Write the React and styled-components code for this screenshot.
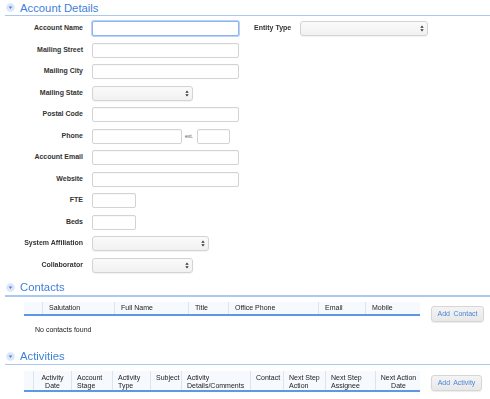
import React from "react";
import styled, { createGlobalStyle } from "styled-components";

const GlobalStyle = createGlobalStyle`
  html, body {
    margin: 0;
    padding: 0;
    background: #ffffff;
  }
  body {
    font-family: "Liberation Sans", Arial, sans-serif;
    color: #222;
  }
`;

const Page = styled.div`
  width: 490px;
  height: 399px;
  padding-left: 5px;
  box-sizing: border-box;
  overflow: hidden;
`;

const SectionHeader = styled.div`
  display: flex;
  align-items: center;
  gap: 5px;
  height: ${(p) => p.h || 15}px;
  margin-top: ${(p) => p.top || 0}px;
  padding-left: 1px;
  border-bottom: ${(p) => p.line || 1}px solid #abc8ef;
  box-sizing: content-box;
`;

const HeaderTitle = styled.span`
  font-size: 11.3px;
  color: #3f80dc;
  line-height: 15px;
  padding-top: 1px;
`;

const Toggle = () => (
  <svg width="9" height="9" viewBox="0 0 9 9">
    <circle cx="4.5" cy="4.5" r="4.3" fill="#dbe7f8" />
    <path d="M2.6 3.6 L6.4 3.6 L4.5 5.9 Z" fill="#4a86d8" />
  </svg>
);

const FormArea = styled.div`
  display: grid;
  grid-template-columns: 249px auto;
  margin-top: 5px;
`;

const Column = styled.div`
  display: flex;
  flex-direction: column;
  gap: 6.5px;
`;

const Row = styled.div`
  display: flex;
  align-items: center;
  gap: 9px;
  height: 15px;
`;

const Label = styled.label`
  width: ${(p) => (p.auto ? "auto" : "78px")};
  text-align: ${(p) => (p.auto ? "left" : "right")};
  font-size: 7px;
  font-weight: bold;
  color: #333;
  white-space: nowrap;
  margin-top: -2px;
`;

const TextInput = styled.input`
  display: block;
  margin: 0;
  width: ${(p) => p.w}px;
  height: 15px;
  box-sizing: border-box;
  border: 1px solid ${(p) => (p.focused ? "#8db4ee" : "#d3d3d3")};
  box-shadow: ${(p) => (p.focused ? "0 0 0 1px #b9d2f5" : "inset 0 1px 1px rgba(0,0,0,0.03)")};
  border-radius: 2px;
  padding: 0 3px;
  font-size: 7px;
  font-family: inherit;
  outline: none;
  background: #fff;
`;

const ExtText = styled.span`
  font-size: 5px;
  color: #555;
  margin: 0 -5px 0 -6px;
`;

const SelectWrap = styled.div`
  position: relative;
  width: ${(p) => p.w}px;
  height: 15px;
  flex-shrink: 0;
`;

const Select = styled.select`
  display: block;
  appearance: none;
  margin: 0;
  padding: 0 3px;
  box-sizing: border-box;
  width: 100%;
  height: 15px;
  border: 1px solid #d3d3d3;
  border-radius: 3px;
  background: linear-gradient(#fafafa, #f1f1f1);
  box-shadow: 0 1px 1px rgba(0, 0, 0, 0.05);
  font-size: 7px;
  line-height: 13px;
  font-family: inherit;
  outline: none;
`;

const Arrows = styled.svg`
  position: absolute;
  right: 4px;
  top: 4px;
  pointer-events: none;
`;

const SelectBox = ({ w }) => (
  <SelectWrap w={w}>
    <Select>
      <option></option>
    </Select>
    <Arrows width="4" height="7" viewBox="0 0 4 7">
      <path d="M0.3 2.8 L2 0.6 L3.7 2.8 Z M0.3 4.2 L2 6.4 L3.7 4.2 Z" fill="#333" />
    </Arrows>
  </SelectWrap>
);

const TableRow = styled.div`
  display: flex;
  align-items: flex-start;
  gap: 11px;
  margin-top: ${(p) => p.top || 0}px;
  padding-left: 19px;
`;

const Table = styled.div`
  display: flex;
  width: 396px;
  background: #f6f9fe;
  border-bottom: 2px solid #5d98e2;
`;

const HeadCell = styled.div`
  width: ${(p) => p.w}px;
  flex-shrink: 0;
  box-sizing: border-box;
  padding: ${(p) => (p.tall ? (p.center ? "3px 1px 1px 1px" : "3px 3px 1px 5px") : "0 4px 0 6px")};
  height: ${(p) => (p.tall ? 19 : 12)}px;
  display: flex;
  align-items: ${(p) => (p.tall ? "flex-start" : "center")};
  justify-content: ${(p) => (p.center ? "center" : "flex-start")};
  text-align: ${(p) => (p.center ? "center" : "left")};
  font-size: 7px;
  line-height: 8px;
  color: #222;
  border-left: ${(p) => (p.first ? "none" : "1px solid #dbe4ef")};
`;

const AddButton = styled.button`
  margin-top: 4px;
  width: ${(p) => p.w}px;
  height: 16px;
  border: 1px solid #d6d6d6;
  border-radius: 3px;
  background: linear-gradient(#f4f4f4, #e8e8e8);
  box-shadow: 0 1px 1px rgba(0, 0, 0, 0.08);
  color: #4a86d8;
  font-family: inherit;
  font-size: 7px;
  word-spacing: 1.5px;
  padding: 0;
`;

const EmptyNote = styled.div`
  font-size: 7px;
  color: #222;
  padding-left: 30px;
  margin-top: 4px;
`;

const contactCols = [
  { w: 18, t: "" },
  { w: 72, t: "Salutation" },
  { w: 74, t: "Full Name" },
  { w: 40, t: "Title" },
  { w: 90, t: "Office Phone" },
  { w: 47, t: "Email" },
  { w: 55, t: "Mobile" },
];

const activityCols = [
  { w: 9, t: "" },
  { w: 38, t: "Activity Date", center: true },
  { w: 41, t: "Account Stage" },
  { w: 38, t: "Activity Type" },
  { w: 31, t: "Subject" },
  { w: 69, t: "Activity Details/Comments" },
  { w: 33, t: "Contact" },
  { w: 42, t: "Next Step Action" },
  { w: 50, t: "Next Step Assignee" },
  { w: 46, t: "Next Action Date", center: true },
];

const leftFields = [
  { label: "Account Name", w: 147, focused: true },
  { label: "Mailing Street", w: 147 },
  { label: "Mailing City", w: 147 },
  { label: "Mailing State", select: 101 },
  { label: "Postal Code", w: 147 },
  { label: "Phone", w: 90, ext: true },
  { label: "Account Email", w: 147 },
  { label: "Website", w: 147 },
  { label: "FTE", w: 44 },
  { label: "Beds", w: 44 },
  { label: "System Affiliation", select: 117 },
  { label: "Collaborator", select: 101 },
];

const App = () => {
  return (
    <Page>
      <GlobalStyle />
      <SectionHeader>
        <Toggle />
        <HeaderTitle>Account Details</HeaderTitle>
      </SectionHeader>

      <FormArea>
        <Column>
          {leftFields.map((f) => (
            <Row key={f.label}>
              <Label>{f.label}</Label>
              {f.select ? (
                <SelectBox w={f.select} />
              ) : (
                <TextInput w={f.w} focused={f.focused} autoFocus={f.focused} />
              )}
              {f.ext && (
                <>
                  <ExtText>ext.</ExtText>
                  <TextInput w={33} />
                </>
              )}
            </Row>
          ))}
        </Column>
        <Column>
          <Row>
            <Label auto>Entity Type</Label>
            <SelectBox w={128} />
          </Row>
        </Column>
      </FormArea>

      <SectionHeader top={7} line={2}>
        <Toggle />
        <HeaderTitle>Contacts</HeaderTitle>
      </SectionHeader>
      <TableRow top={5}>
        <Table>
          {contactCols.map((c, i) => (
            <HeadCell key={i} w={c.w} first={i === 0}>
              {c.t}
            </HeadCell>
          ))}
        </Table>
        <AddButton w={53}>Add Contact</AddButton>
      </TableRow>
      <EmptyNote>No contacts found</EmptyNote>

      <SectionHeader top={16}>
        <Toggle />
        <HeaderTitle>Activities</HeaderTitle>
      </SectionHeader>
      <TableRow top={6}>
        <Table>
          {activityCols.map((c, i) => (
            <HeadCell key={i} w={c.w} tall first={i === 0} center={c.center}>
              {c.t}
            </HeadCell>
          ))}
        </Table>
        <AddButton w={51}>Add Activity</AddButton>
      </TableRow>
    </Page>
  );
};

export default App;
